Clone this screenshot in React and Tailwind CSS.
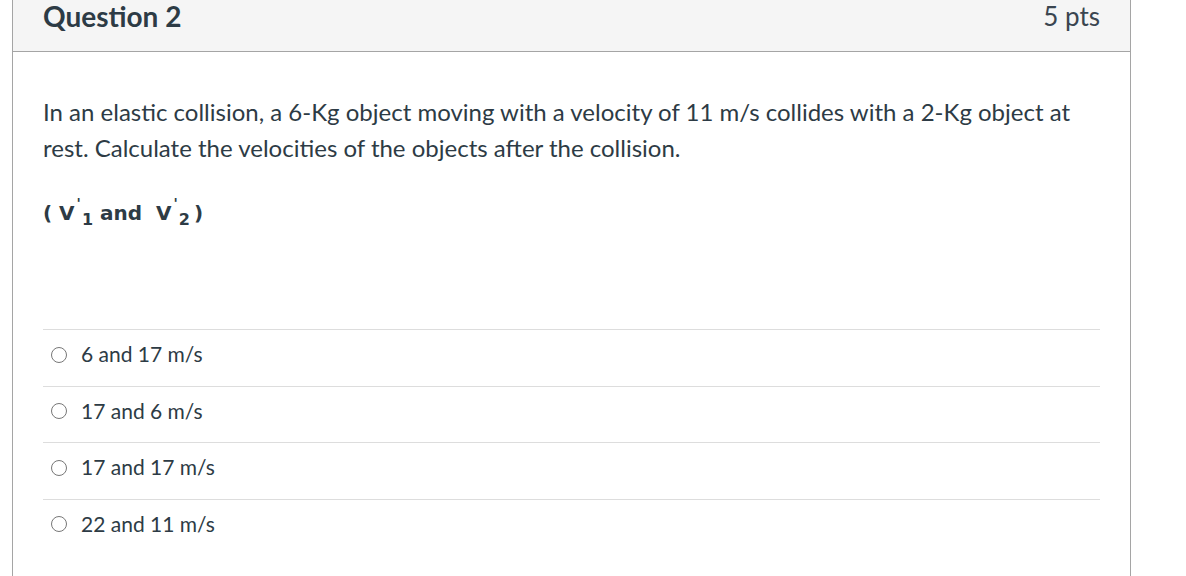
import React from "react";

const answers = ["6 and 17 m/s", "17 and 6 m/s", "17 and 17 m/s", "22 and 11 m/s"];

function Prime({ sub }) {
  return (
    <>
      <span className="relative -top-[12px] text-[14px] ml-[2px]">'</span>
      <span className="relative top-[5px] text-[16px] ml-[1px]">{sub}</span>
    </>
  );
}

export default function App() {
  return (
    <div className="w-[1186px] h-[576px] overflow-hidden bg-white pl-[12px]" style={{ fontFamily: "Lato, 'Liberation Sans', sans-serif" }}>
      <div className="w-[1119px] h-full border-x border-[#a5a5a5] text-[#2d3b45]">
        <div className="h-[52px] bg-[#f5f5f5] border-b border-[#a5a5a5] px-[30px] flex justify-between items-start">
          <div className="text-[28px] font-bold leading-[32px]">Question 2</div>
          <div className="text-[26px] leading-[32px] text-[#3a4550]">5 pts</div>
        </div>
        <div className="px-[30px] pt-[42px]">
          <p className="text-[24px] leading-[36px]">
            In an elastic collision, a 6-Kg object moving with a velocity of 11 m/s collides with a 2-Kg object at rest. Calculate the velocities of the objects after the collision.
          </p>
          <p className="mt-[32px] text-[20px] font-semibold leading-[30px] whitespace-pre" style={{ fontFamily: "'DejaVu Sans', sans-serif" }}>
            {"( V"}<Prime sub="1" />{" and  V"}<Prime sub="2" /><span className="ml-[4px]">)</span>
          </p>
          <div className="mt-[99px]">
            {answers.map((a) => (
              <div key={a} className="border-t border-[#dddddd] h-[56.5px] flex items-start pt-[11px] pl-[8px]">
                <span className="mt-[5.5px] w-[16px] h-[16px] rounded-full border-[1.5px] border-[#777] bg-white shrink-0" />
                <span className="ml-[14px] text-[21px] leading-[25px]">{a}</span>
              </div>
            ))}
          </div>
        </div>
      </div>
    </div>
  );
}
